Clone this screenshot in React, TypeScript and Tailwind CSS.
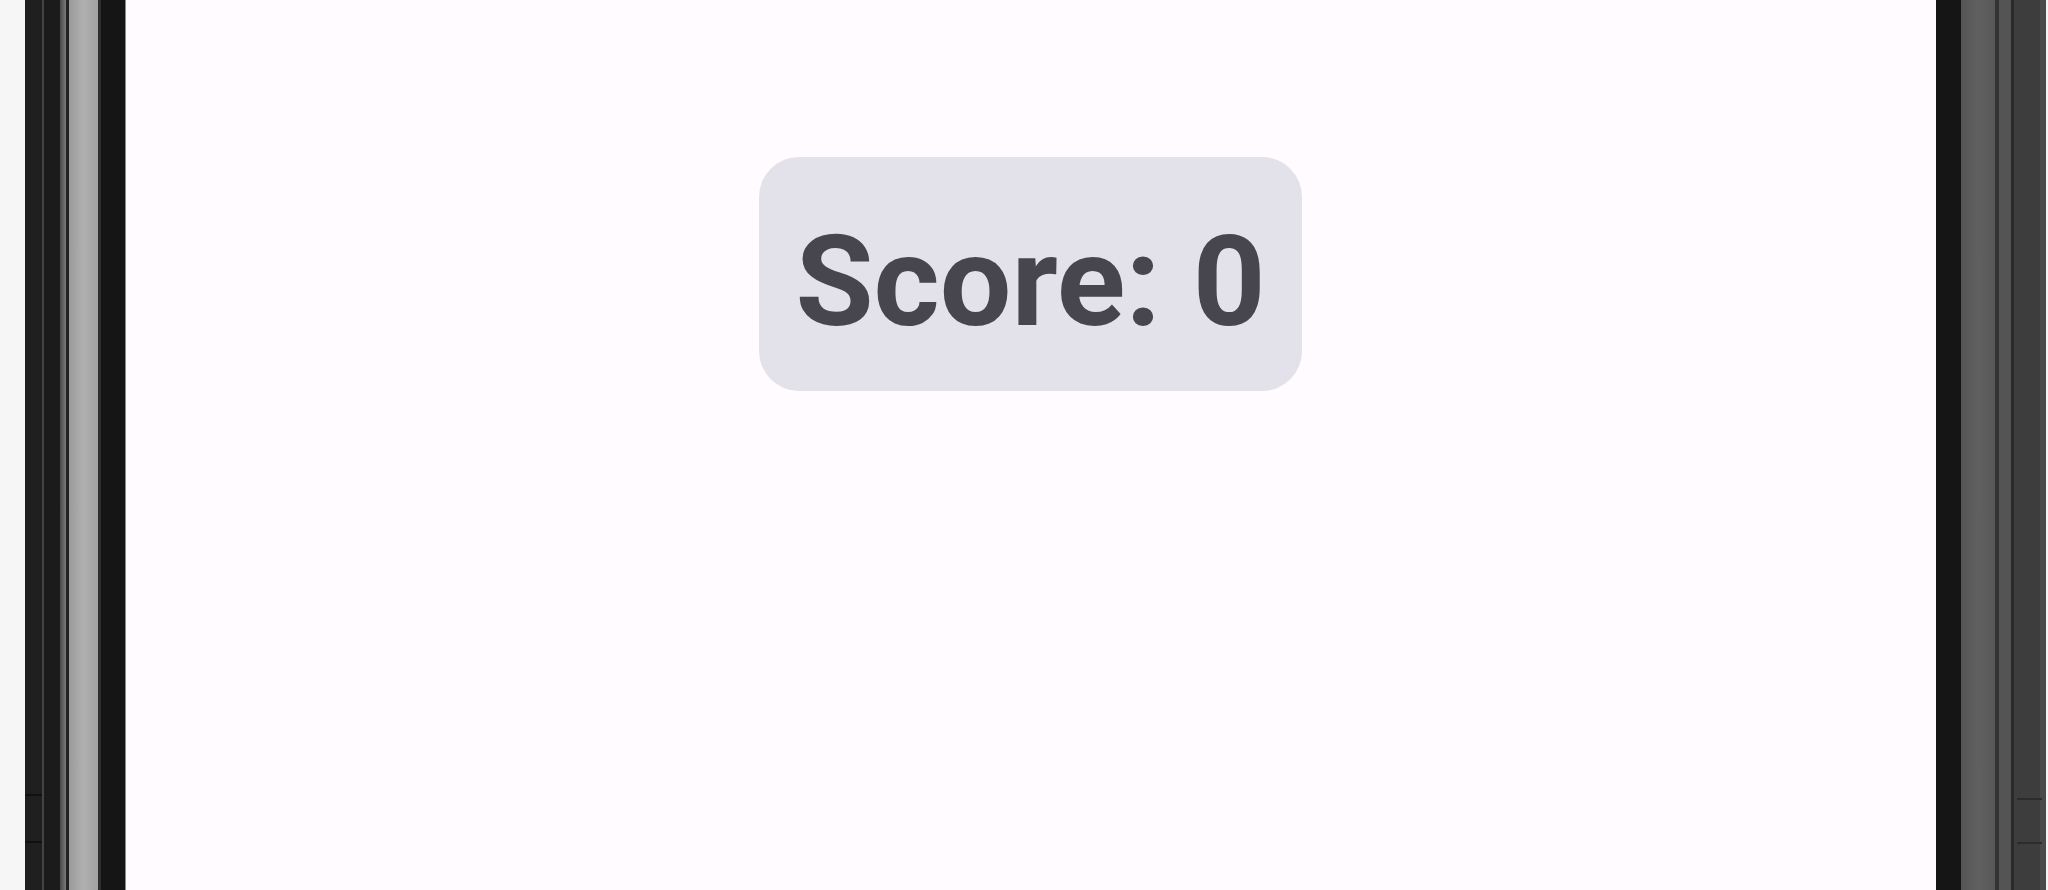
import React from "react";

export default function App() {
  return (
    <div className="flex h-[890px] w-[2048px] overflow-hidden bg-[#f7f7f7]">
      {/* left outside */}
      <div className="w-[25px] shrink-0 bg-[#f6f6f6]" />
      {/* left frame */}
      <div className="relative flex w-[101px] shrink-0">
        <div className="w-[17px] bg-[#1f1f1f]" />
        <div className="w-[2px] bg-[#444444]" />
        <div className="w-[16px] bg-[#1b1b1b]" />
        <div className="w-[6px] bg-gradient-to-r from-[#4a4a4a] to-[#7a7a7a]" />
        <div className="w-[3px] bg-[#222222]" />
        <div className="w-[29px] bg-gradient-to-r from-[#9a9a9a] via-[#b0b0b0] to-[#a2a2a2]" />
        <div className="w-[3px] bg-[#2e2e2e]" />
        <div className="w-[24px] bg-[#151515]" />
        <div className="w-[1px] bg-[#8a8a8a]" />
        <div className="absolute left-0 top-[794px] h-[2px] w-[17px] bg-[#111111]" />
        <div className="absolute left-0 top-[841px] h-[2px] w-[17px] bg-[#111111]" />
      </div>
      {/* screen */}
      <div className="flex-1 bg-[#fffbfe] pl-[633px] pt-[157px]">
        <div className="flex h-[234px] w-[543px] items-center justify-center rounded-[40px] bg-[#e3e2ea] pt-[14px]">
          <span
            className="text-[127px] font-bold leading-none text-[#47464f]"
            style={{ fontFamily: "Roboto, 'Liberation Sans', sans-serif" }}
          >
            Score: 0
          </span>
        </div>
      </div>
      {/* right frame */}
      <div className="relative flex w-[112px] shrink-0">
        <div className="w-[25px] bg-[#151515]" />
        <div className="w-[34px] bg-gradient-to-r from-[#555555] via-[#606060] to-[#585858]" />
        <div className="w-[4px] bg-[#333333]" />
        <div className="w-[12px] bg-[#545454]" />
        <div className="w-[3px] bg-[#2a2a2a]" />
        <div className="w-[26px] bg-[#3d3d3d]" />
        <div className="w-[6px] bg-[#4a4a4a]" />
        <div className="w-[2px] bg-[#f4f4f4]" />
        <div className="absolute left-[81px] top-[798px] h-[2px] w-[25px] bg-[#2c2c2c]" />
        <div className="absolute left-[81px] top-[842px] h-[2px] w-[25px] bg-[#2c2c2c]" />
      </div>
    </div>
  );
}
